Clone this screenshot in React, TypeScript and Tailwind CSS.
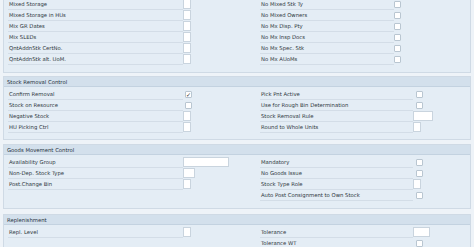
type Ctl = "none" | "box" | "check" | "checked" | { w: number };

type Row = { label: string; ctl: Ctl };

const Control = ({ ctl, off }: { ctl: Ctl; off: string }) => {
  if (ctl === "none") return null;
  if (ctl === "check" || ctl === "checked")
    return (
      <div className={`${off} mt-[2px] w-[7px] h-[7px] border border-[#b9c6d1] bg-white rounded-[1px] flex items-center justify-center text-[6px] leading-none text-[#333]`}>
        {ctl === "checked" ? "✓" : ""}
      </div>
    );
  if (ctl === "box")
    return <div className="w-[8px] h-[10px] border border-[#c9d4de] bg-white" />;
  return <div className="h-[10px] border border-[#c9d4de] bg-white" style={{ width: ctl.w }} />;
};

const Col = ({ rows, labelW, cls, off }: { rows: Row[]; labelW: string; cls: string; off: string }) => (
  <div className={`flex flex-col ${cls}`}>
    {rows.map((r, i) => (
      <div key={i} className="flex h-[11px]">
        <div className={`${labelW} shrink-0 border-b border-[#d3dde7] pl-[1px] leading-[10px]`}>{r.label}</div>
        <Control ctl={r.ctl} off={off} />
      </div>
    ))}
  </div>
);

const Panel = ({
  title,
  left,
  right,
  rightW,
  rightOff,
  className,
}: {
  title?: string;
  left: Row[];
  right: Row[];
  rightW: string;
  rightOff: string;
  className: string;
}) => (
  <div className={`mx-[3px] border border-[#cfdae5] bg-[#e4edf5] ${className}`}>
    {title !== undefined && (
      <div className="h-[10px] bg-[#d3e0ec] border-b border-[#c3d2e0] pl-[3px] leading-[10px] text-[#26313c]">
        {title}
      </div>
    )}
    <div className={`flex ${title !== undefined ? "pt-[2px]" : ""}`}>
      <Col rows={left} labelW="w-[175px]" cls="w-[232px] shrink-0 pl-[4px]" off="ml-[2px]" />
      <Col rows={right} labelW={rightW} cls="pl-[24px]" off={rightOff} />
    </div>
  </div>
);

export default function App() {
  return (
    <div className="w-[474px] h-[247px] overflow-hidden bg-[#eef3f8] font-[family-name:DejaVu_Sans,sans-serif] text-[5.3px] text-[#2e3740]">
      <Panel
        className="h-[74px] -mt-[1px] border-t-0"
        left={[
          { label: "Mixed Storage", ctl: "box" },
          { label: "Mixed Storage in HUs", ctl: "box" },
          { label: "Mix GR Dates", ctl: "box" },
          { label: "Mix SLEDs", ctl: "box" },
          { label: "QntAddnStk CertNo.", ctl: "box" },
          { label: "QntAddnStk alt. UoM.", ctl: "box" },
        ]}
        rightW="w-[134px]"
        rightOff=""
        right={[
          { label: "No Mixed Stk Ty", ctl: "check" },
          { label: "No Mixed Owners", ctl: "check" },
          { label: "No Mx Disp. Pty", ctl: "check" },
          { label: "No Mx Insp Docs", ctl: "check" },
          { label: "No Mx Spec. Stk", ctl: "check" },
          { label: "No Mx AUoMs", ctl: "check" },
        ]}
      />
      <Panel
        className="mt-[3px] h-[64px]"
        title="Stock Removal Control"
        left={[
          { label: "Confirm Removal", ctl: "checked" },
          { label: "Stock on Resource", ctl: "check" },
          { label: "Negative Stock", ctl: "box" },
          { label: "HU Picking Ctrl", ctl: "box" },
        ]}
        rightW="w-[153px]"
        rightOff="ml-[3px]"
        right={[
          { label: "Pick Pnt Active", ctl: "check" },
          { label: "Use for Rough Bin Determination", ctl: "check" },
          { label: "Stock Removal Rule", ctl: { w: 20 } },
          { label: "Round to Whole Units", ctl: { w: 8 } },
        ]}
      />
      <Panel
        className="mt-[4px] h-[65px]"
        title="Goods Movement Control"
        left={[
          { label: "Availability Group", ctl: { w: 46 } },
          { label: "Non-Dep. Stock Type", ctl: { w: 12 } },
          { label: "Post.Change Bin", ctl: "box" },
        ]}
        rightW="w-[153px]"
        rightOff="ml-[3px]"
        right={[
          { label: "Mandatory", ctl: "check" },
          { label: "No Goods Issue", ctl: "check" },
          { label: "Stock Type Role", ctl: { w: 8 } },
          { label: "Auto Post Consignment to Own Stock", ctl: "check" },
        ]}
      />
      <Panel
        className="mt-[5px] h-[40px]"
        title="Replenishment"
        left={[{ label: "Repl. Level", ctl: "box" }]}
        rightW="w-[153px]"
        rightOff="ml-[3px]"
        right={[
          { label: "Tolerance", ctl: { w: 17 } },
          { label: "Tolerance WT", ctl: "check" },
        ]}
      />
    </div>
  );
}
